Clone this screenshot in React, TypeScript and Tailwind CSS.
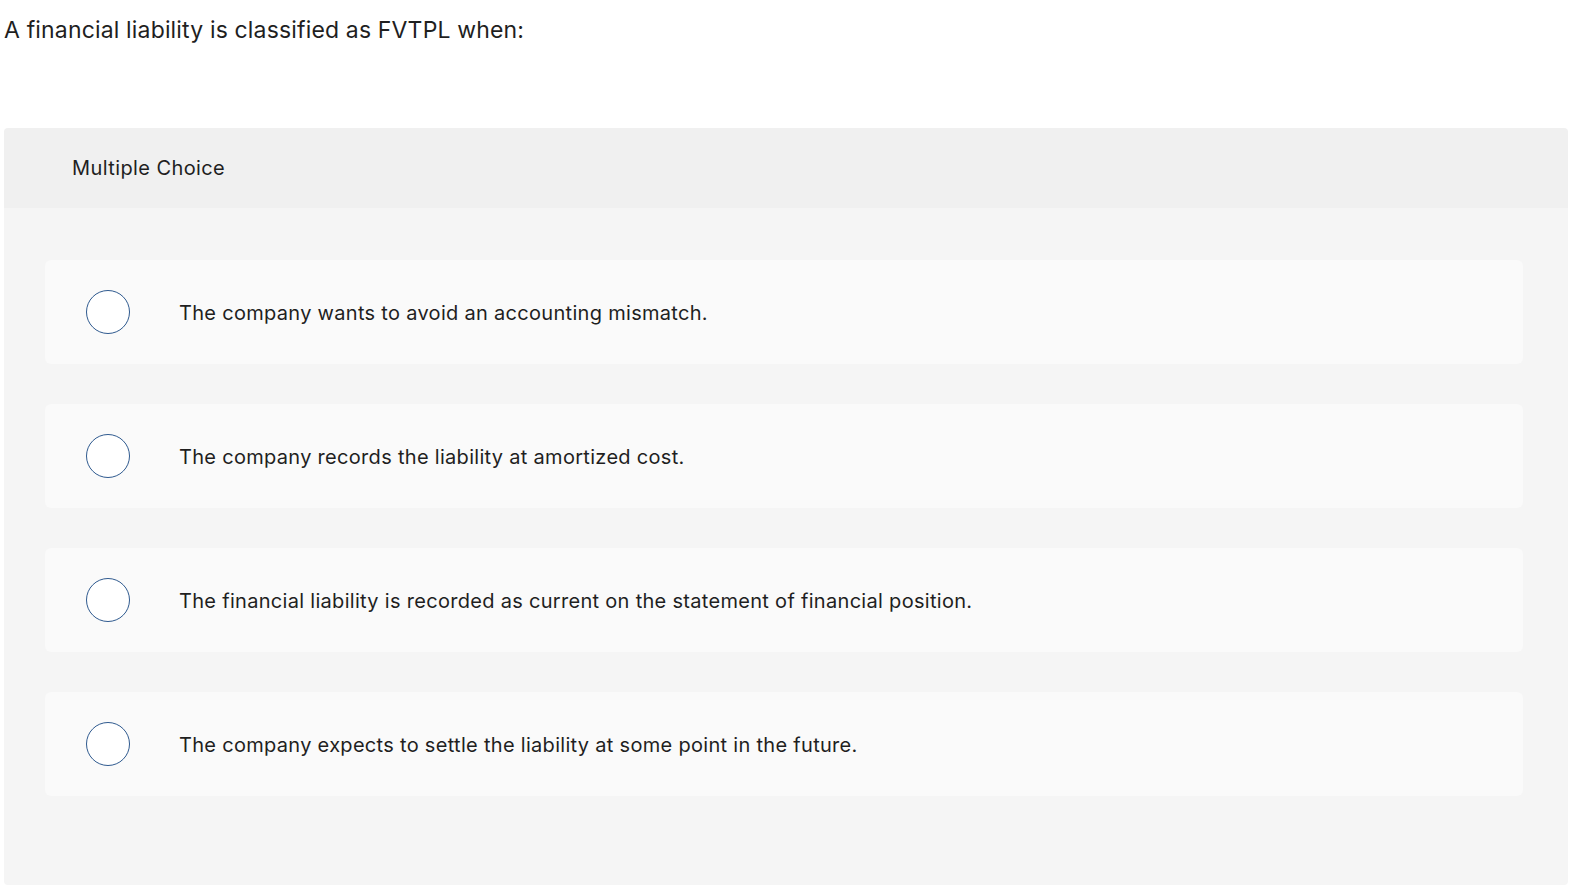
import React from "react";

const options = [
  "The company wants to avoid an accounting mismatch.",
  "The company records the liability at amortized cost.",
  "The financial liability is recorded as current on the statement of financial position.",
  "The company expects to settle the liability at some point in the future.",
];

export default function App() {
  return (
    <div
      className="min-h-screen bg-white px-[4px] text-[#1f1f1f] [font-variant-ligatures:none]"
      style={{ fontFamily: "Inter, 'Open Sans', sans-serif" }}
    >
      <div className="flex h-[60px] items-center text-[23px] tracking-[0.16px]">
        A financial liability is classified as FVTPL when:
      </div>
      <div className="mt-[68px] w-[1564px] overflow-hidden rounded-[4px]">
        <div className="flex h-[80px] items-center bg-[#f0f0f0] pl-[68px] text-[20px] tracking-[0.4px]">
          Multiple Choice
        </div>
        <div className="flex flex-col gap-[40px] bg-[#f5f5f5] pb-[89px] pl-[41px] pr-[45px] pt-[52px]">
          {options.map((o) => (
            <div key={o} className="flex h-[104px] items-center rounded-[6px] bg-[#fafafa] pl-[41px]">
              <div className="h-[44px] w-[44px] shrink-0 rounded-full border border-[#2f5a8f] bg-white" />
              <div className="ml-[49px] pt-[2px] text-[20px] tracking-[0.3px]">{o}</div>
            </div>
          ))}
        </div>
      </div>
    </div>
  );
}
